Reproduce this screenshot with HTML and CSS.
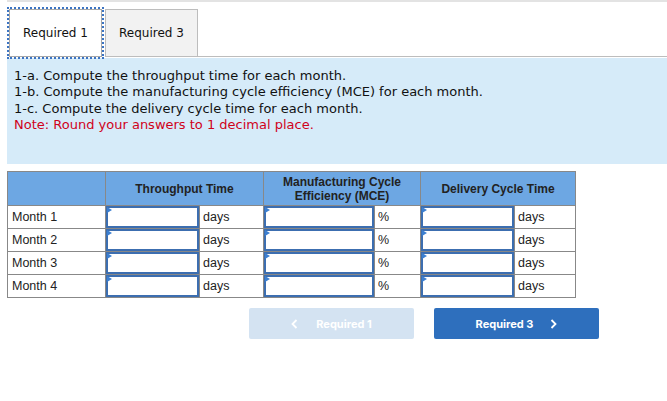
FILE: index.html
```html
<!DOCTYPE html>
<html>
<head>
<meta charset="utf-8">
<link rel="stylesheet" href="styles.css">
</head>
<body>
<div class="topbar"></div>
<div class="page">
  <div class="tabs">
    <div class="tab tab-active">Required 1</div>
    <div class="tab tab-inactive">Required 3</div>
    <div class="tab-rest"></div>
  </div>
  <div class="instructions">
    <div>1-a. Compute the throughput time for each month.</div>
    <div>1-b. Compute the manufacturing cycle efficiency (MCE) for each month.</div>
    <div>1-c. Compute the delivery cycle time for each month.</div>
    <div class="note">Note: Round your answers to 1 decimal place.</div>
  </div>
  <table class="grid">
    <colgroup>
      <col class="c-label"><col class="c-in1"><col class="c-unit1"><col class="c-in2"><col class="c-unit2"><col class="c-in3"><col class="c-unit3">
    </colgroup>
    <thead>
      <tr>
        <th></th>
        <th colspan="2">Throughput Time</th>
        <th colspan="2">Manufacturing Cycle<br>Efficiency (MCE)</th>
        <th colspan="2">Delivery Cycle Time</th>
      </tr>
    </thead>
    <tbody>
      <tr><td class="lbl">Month 1</td><td class="inp"><div class="box"></div></td><td class="unit">days</td><td class="inp"><div class="box"></div></td><td class="unit">%</td><td class="inp"><div class="box"></div></td><td class="unit">days</td></tr>
      <tr><td class="lbl">Month 2</td><td class="inp"><div class="box"></div></td><td class="unit">days</td><td class="inp"><div class="box"></div></td><td class="unit">%</td><td class="inp"><div class="box"></div></td><td class="unit">days</td></tr>
      <tr><td class="lbl">Month 3</td><td class="inp"><div class="box"></div></td><td class="unit">days</td><td class="inp"><div class="box"></div></td><td class="unit">%</td><td class="inp"><div class="box"></div></td><td class="unit">days</td></tr>
      <tr><td class="lbl">Month 4</td><td class="inp"><div class="box"></div></td><td class="unit">days</td><td class="inp"><div class="box"></div></td><td class="unit">%</td><td class="inp"><div class="box"></div></td><td class="unit">days</td></tr>
    </tbody>
  </table>
  <div class="nav">
    <div class="btn btn-disabled"><svg class="chev chev-l" width="7" height="10" viewBox="0 0 7 10"><polyline points="5.5,1 1.5,5 5.5,9" fill="none" stroke="#fff" stroke-width="1.8"/></svg>Required 1</div>
    <div class="btn btn-primary">Required 3<svg class="chev chev-r" width="7" height="10" viewBox="0 0 7 10"><polyline points="1.5,1 5.5,5 1.5,9" fill="none" stroke="#fff" stroke-width="1.8"/></svg></div>
  </div>
</div>
</body>
</html>
```
FILE: styles.css
```css
html, body {
  margin: 0;
  padding: 0;
  background: #ffffff;
}
.topbar {
  height: 2px;
  margin-left: 7px;
  background: #e3e3e3;
}
.page {
  padding-left: 7px;
}
.tabs {
  display: flex;
  margin-top: 7px;
  height: 48px;
  padding-left: 2px;
}
.tab {
  box-sizing: border-box;
  width: 93px;
  height: 48px;
  border: 1px solid #bdbdbd;
  font-family: "DejaVu Sans", Verdana, sans-serif;
  font-size: 12px;
  color: #111;
  display: flex;
  align-items: center;
  justify-content: center;
  padding-bottom: 1px;
}
.tab-active {
  background: #fff;
  outline: 2px dotted #3b74c3;
  margin-right: 3px;
  border-color: #a8a8a8;
}
.tab-inactive {
  background: #f2f2f2;
}
.tab-rest {
  flex: 1;
  border-bottom: 1px solid #bdbdbd;
}
.instructions {
  margin-top: 1px;
  background: #d6ebf9;
  height: 106px;
  box-sizing: border-box;
  padding: 10px 7px;
  font-family: "DejaVu Sans", Verdana, sans-serif;
  font-size: 13px;
  line-height: 16.3px;
  color: #111;
}
.note {
  color: #d0021b;
}
.grid {
  margin-top: 7px;
  border-collapse: collapse;
  width: 568px;
  table-layout: fixed;
  font-family: "Liberation Sans", Arial, sans-serif;
  font-size: 12.5px;
  color: #222;
}
.c-label { width: 98px; }
.c-in1 { width: 94px; }
.c-unit1 { width: 64px; }
.c-in2 { width: 111px; }
.c-unit2 { width: 46px; }
.c-in3 { width: 94px; }
.c-unit3 { width: 61px; }
.grid th {
  background: #6da7e3;
  border: 1px solid #888;
  height: 34px;
  box-sizing: border-box;
  padding: 0;
  font-size: 12px;
  font-weight: bold;
  line-height: 14px;
  color: #222;
}
.grid tbody tr {
  height: 23px;
}
.grid td {
  border: 1px solid #888;
  padding: 0;
  height: 22px;
  box-sizing: border-box;
}
.grid td.lbl {
  padding-left: 4px;
}
.grid td.unit {
  padding-left: 3px;
}
.grid td.inp {
  padding: 0;
}
.box {
  position: relative;
  box-sizing: border-box;
  height: 22px;
  border: 2px solid #3c6eb0;
  background: #fff;
}
.box::before {
  content: "";
  position: absolute;
  left: -1px;
  top: -1px;
  border-top: 3px solid transparent;
  border-bottom: 3px solid transparent;
  border-left: 5px solid #3c7fd0;
}
.nav {
  display: flex;
  gap: 20px;
  margin-top: 10px;
  padding-left: 242px;
}
.btn {
  width: 165px;
  height: 31px;
  border-radius: 2px;
  display: flex;
  align-items: center;
  justify-content: center;
  font-family: Inter, "Liberation Sans", sans-serif;
  font-weight: bold;
  font-size: 11px;
  color: #fff;
}
.btn-disabled {
  background: #d4e3f2;
}
.btn-primary {
  background: #2e6fbd;
}
.chev-l {
  margin-right: 18px;
}
.chev-r {
  margin-left: 17px;
}
```
